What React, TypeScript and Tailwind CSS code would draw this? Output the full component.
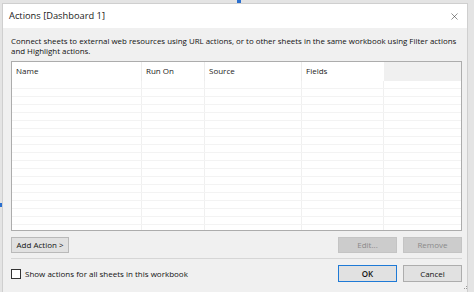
import { X } from "lucide-react";

const font = { fontFamily: '"Open Sans", "Noto Sans", Arial, sans-serif' };

const cols = "grid grid-cols-[130px_63px_97px_82px_1fr]";

export default function App() {
  const rows = Array.from({ length: 19 });

  return (
    <div
      className="relative h-[292px] w-[474px] overflow-hidden bg-[#e4e4e4] pt-[3px] pl-[2px]"
      style={font}
    >
      {/* blue markers of the canvas behind the dialog */}
      <div className="absolute left-[237px] top-0 h-[3px] w-[4px] bg-[#2a6fcf]" />
      <div className="absolute left-0 top-[203px] h-[4px] w-[2px] bg-[#2a6fcf]" />

      <div className="flex h-[300px] w-[466px] flex-col border border-[#cfcfcf] bg-[#f0f0f0]">
        {/* Title bar */}
        <div className="flex h-[24px] shrink-0 items-center justify-between bg-white pl-[6px] pr-[7px]">
          <span className="text-[9.3px] text-[#1a1a1a]">Actions [Dashboard 1]</span>
          <X className="h-[11px] w-[11px] text-[#333]" strokeWidth={1.2} />
        </div>

        {/* Body */}
        <div className="flex flex-col pl-[8px] pr-[5px] pt-[8px]">
          <p className="whitespace-nowrap text-[7.9px] leading-[10px] text-[#111]">
            Connect sheets to external web resources using URL actions, or to other sheets in the same workbook using Filter actions
            <br />
            and Highlight actions.
          </p>

          {/* Table */}
          <div className="mt-[5px] h-[170px] overflow-hidden border border-[#acacac] bg-white">
            <div className={`${cols} h-[19px] text-[8px] text-[#222]`}>
              <div className="border-r border-[#ececec] pl-[4px] pt-[3px]">Name</div>
              <div className="border-r border-[#ececec] pl-[4px] pt-[3px]">Run On</div>
              <div className="border-r border-[#ececec] pl-[4px] pt-[3px]">Source</div>
              <div className="pl-[4px] pt-[3px]">Fields</div>
              <div className="bg-[#f0f0f0]" />
            </div>
            {rows.map((_, i) => (
              <div key={i} className={`${cols} h-[8px] border-b border-[#f3f3f3]`}>
                <div className="border-r border-[#f0f0f0]" />
                <div className="border-r border-[#f0f0f0]" />
                <div className="border-r border-[#f0f0f0]" />
                <div className="border-r border-[#f0f0f0]" />
                <div />
              </div>
            ))}
          </div>

          {/* Action buttons */}
          <div className="mt-[6px] flex items-center">
            <button className="flex h-[16px] w-[58px] items-center justify-center border border-[#b9b9b9] bg-[#e1e1e1] text-[8px] text-[#111]">
              Add Action &gt;
            </button>
            <div className="ml-auto flex gap-[6px]">
              <button className="flex h-[16px] w-[59px] items-center justify-center border border-[#c4c4c4] bg-[#cccccc] text-[8px] text-[#8a8a8a]">
                Edit...
              </button>
              <button className="flex h-[16px] w-[59px] items-center justify-center border border-[#c4c4c4] bg-[#cccccc] text-[8px] text-[#8a8a8a]">
                Remove
              </button>
            </div>
          </div>

          <div className="mt-[5px] h-px bg-[#d6d6d6]" />

          {/* Footer */}
          <div className="mt-[6px] flex items-center">
            <div className="h-[10px] w-[10px] border border-[#333] bg-white" />
            <span className="ml-[4px] text-[8px] text-[#111]">Show actions for all sheets in this workbook</span>
            <div className="ml-auto flex gap-[6px]">
              <button className="flex h-[17px] w-[59px] items-center justify-center border-[1.5px] border-[#1f7ad6] bg-[#e1e1e1] text-[8px] font-semibold text-[#111]">
                OK
              </button>
              <button className="flex h-[17px] w-[59px] items-center justify-center border border-[#adadad] bg-[#e1e1e1] text-[8px] text-[#111]">
                Cancel
              </button>
            </div>
          </div>
        </div>
      </div>

      {/* resize grip */}
      <div className="absolute bottom-[3px] right-[7px] grid grid-cols-3 gap-px">
        <span />
        <span />
        <span className="h-px w-px bg-[#999]" />
        <span />
        <span className="h-px w-px bg-[#999]" />
        <span className="h-px w-px bg-[#999]" />
      </div>
    </div>
  );
}
